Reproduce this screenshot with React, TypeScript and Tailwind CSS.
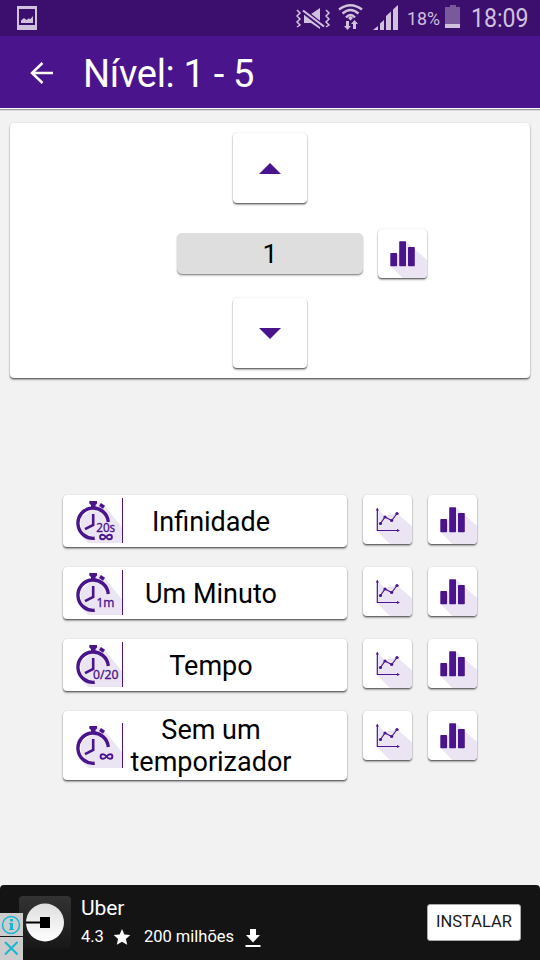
import React from 'react';

interface GameMode {
  label: string;
  badge?: string;
  badgeX?: number;
  badgeWidth?: number;
  badgeY?: number;
  infinite?: boolean;
}

const modes: GameMode[] = [
  { label: 'Infinidade', badge: '20s', badgeX: 33.2, badgeWidth: 19, badgeY: 34, infinite: true },
  { label: 'Um Minuto', badge: '1m', badgeX: 33.5, badgeWidth: 18, badgeY: 36.5 },
  { label: 'Tempo', badge: '0/20', badgeX: 30, badgeWidth: 25.5, badgeY: 36.5 },
  { label: 'Sem um temporizador', infinite: true }
];

const raised =
  'bg-white rounded-[4px] shadow-[0_1px_1px_rgba(0,0,0,0.4),0_2px_2px_rgba(0,0,0,0.3),0_0_2px_rgba(0,0,0,0.12)]';

const StatusBar: React.FC = () => (
  <div className="h-9 bg-[#3c0f6e] flex items-center justify-between text-[#d0c1dd]">
    <svg className="ml-[17px]" width="20" height="24" viewBox="0 0 20 24" fill="currentColor">
      <path fillRule="evenodd" d="M0 0H20V24H0ZM2 3V19H18V3Z" />
      <path d="M4 17V14.5L7 12L9.5 14L11.5 12.5L13.5 13L16 10V17Z" />
    </svg>
    <svg width="245" height="36" viewBox="295 0 245 36" fill="none" stroke="currentColor">
      {/* muted speaker with vibration marks */}
      <path strokeWidth="1.5" d="M297 10L300 13L297 16L300 19L297 22L300 25L297 27M326 10L329 13L326 16L329 19L326 22L329 25L326 27" />
      <path fill="currentColor" stroke="none" d="M304 14H311L320 8V29L311 23H304Z" />
      <path stroke="#3c0f6e" strokeWidth="5" d="M302 10L324 27" />
      <path strokeWidth="2.2" d="M303 10.5L324 26.5" />
      {/* wifi and traffic arrows */}
      <path strokeWidth="2.4" d="M339 9.5Q350.5 1 362 9.5M342.5 13.5Q350.5 6.5 358.5 13.5M346 17.5Q350.5 12.5 355 17.5" />
      <path fill="currentColor" stroke="none" d="M348 18L350.5 16L353 18L350.5 20.5ZM346 21H349V26H351L347.5 30L344 26H346ZM353 29H356V24H358L354.5 20L351 24H353Z" />
      <path fill="currentColor" stroke="none" d="M373 30L378 26V30ZM380 23.5L384 20V30H380ZM386 16L391 11.5V30H386ZM393 9.5L398 5V30H393Z" />
      <text x="407" y="25" fill="currentColor" stroke="none" fontSize="18.5" textLength="33" lengthAdjust="spacingAndGlyphs" fontFamily="Roboto, sans-serif">18%</text>
      <path fill="#79589c" stroke="none" d="M445 7H450V5H456V7H460V24H445Z" />
      <path fill="currentColor" stroke="none" d="M445 24H460V28H445Z" />
      <text x="471" y="27" fill="currentColor" stroke="none" fontSize="25" textLength="57.5" lengthAdjust="spacingAndGlyphs" fontFamily="Roboto, sans-serif">18:09</text>
    </svg>
  </div>
);

const BarsButton: React.FC = () => (
  <button type="button" className={`${raised} block w-[49px] h-[49px] shrink-0 overflow-hidden`}>
    <svg width="49" height="49" viewBox="0 0 49 49">
      <path fill="#ebe4f3" d="M28 12.5L49 31V49H24.5L12.5 37Z" />
      <path fill="white" d="M12.3 24H19.1L21.2 22V12.3H12.3Z" />
      <g fill="#4a148c">
        <rect x="12.3" y="24" width="6.8" height="13.2" rx="0.8" />
        <rect x="21.2" y="12.3" width="6.8" height="24.9" rx="0.8" />
        <rect x="30" y="18" width="6.8" height="19.2" rx="0.8" />
      </g>
    </svg>
  </button>
);

const LineButton: React.FC = () => (
  <button type="button" className={`${raised} block w-[49px] h-[49px] shrink-0 overflow-hidden`}>
    <svg width="49" height="49" viewBox="0 0 49 49">
      <path fill="#ebe4f3" d="M14 14L22 21L34 18L49 31.5V49H27L14 36Z" />
      <path fill="none" stroke="#4a148c" strokeWidth="1.2" d="M14.3 14V35.5H35M17.5 28.5L22 22L28.7 25.5L34 18.5" />
      <g fill="#4a148c">
        <circle cx="17.5" cy="28.5" r="1.6" />
        <circle cx="22" cy="22" r="1.6" />
        <circle cx="28.7" cy="25.5" r="1.6" />
        <circle cx="34" cy="18.5" r="1.6" />
        <path d="M12.8 15.5L14.3 12.5L15.8 15.5ZM34 34L37 35.5L34 37Z" />
      </g>
    </svg>
  </button>
);

const TimerIcon: React.FC<{ mode: GameMode }> = ({ mode }) => (
  <svg width="61" height="45" viewBox="0 0 61 45" className="-mt-px shrink-0">
    <path fill="#ebe4f3" d="M34 3.5L42 8L59 29.5V45H25L19 38.5L17 20L30 10Z" />
    <path fill="white" d="M12 0H26V9A16 16 0 0 0 14 25H12Z" />
    <g fill="none" stroke="#4a148c">
      <path strokeWidth="3.4" d="M45.3 24A15.2 15.2 0 1 0 31.7 40.3" />
      <path strokeWidth="2.6" d="M30.2 16V27L22 31.2" />
      <path strokeWidth="3.5" d="M37 6.5L41 9.2" />
      {mode.infinite && (
        <path
          strokeWidth="1.9"
          d="M43 39C41.7 37.3 40.8 36.7 39.5 36.7C36.3 36.7 36.3 41.3 39.5 41.3C40.8 41.3 41.7 40.7 43 39C44.3 37.3 45.2 36.7 46.5 36.7C49.7 36.7 49.7 41.3 46.5 41.3C45.2 41.3 44.3 40.7 43 39Z"
          transform={mode.badge ? undefined : 'translate(0.5 -5.5)'}
        />
      )}
    </g>
    <path fill="#4a148c" d="M26.3 3H34V5.5L32.5 7V9.5H28V7L26.3 5.5Z" />
    {mode.badge && (
      <text
        x={mode.badgeX}
        y={mode.badgeY}
        fill="#4a148c"
        stroke="#4a148c"
        strokeWidth="0.3"
        fontSize="12"
        textLength={mode.badgeWidth}
        lengthAdjust="spacingAndGlyphs"
        fontFamily="'Noto Sans', sans-serif"
      >
        {mode.badge}
      </text>
    )}
    <rect x="59" width="1" height="45" fill="#4a148c" />
  </svg>
);

const ModeRow: React.FC<{ mode: GameMode }> = ({ mode }) => (
  <div className="flex items-start">
    <button type="button" className={`${raised} w-[284px] min-h-[52px] flex items-center`}>
      <TimerIcon mode={mode} />
      <span className="w-[174px] pt-[3px] pb-[2px] text-[27px] leading-8 text-black text-center">{mode.label}</span>
    </button>
    <div className="ml-4 flex gap-4">
      <LineButton />
      <BarsButton />
    </div>
  </div>
);

const LevelPicker: React.FC = () => (
  <div className={`${raised} mx-[10px] mt-[12px] h-[255px] pt-[10px] flex flex-col items-center`}>
    <button type="button" className={`${raised} w-[74px] h-[70px] flex items-center justify-center`}>
      <svg width="22" height="11" viewBox="0 0 22 11" fill="#4a148c">
        <path d="M0 11L11 0L22 11Z" />
      </svg>
    </button>
    <div className="mt-[26px] w-full pl-[167px] flex items-center">
      <div className="w-[186px] h-[41px] rounded-[5px] bg-[#dedede] shadow-[0_1px_1px_rgba(0,0,0,0.3),0_2px_2px_rgba(0,0,0,0.2)] pt-px text-[26.7px] text-black flex items-center justify-center">
        1
      </div>
      <div className="ml-[15px]">
        <BarsButton />
      </div>
    </div>
    <button type="button" className={`${raised} mt-[20px] w-[74px] h-[70px] flex items-center justify-center`}>
      <svg width="22" height="11" viewBox="0 0 22 11" fill="#4a148c">
        <path d="M0 0H22L11 11Z" />
      </svg>
    </button>
  </div>
);

const AdBanner: React.FC = () => (
  <div className="relative mt-auto h-[75px] rounded-t-[4px] bg-[#141414] text-white flex items-start overflow-hidden">
    <svg className="ml-[19px] mt-[11px] shrink-0" width="52" height="53" viewBox="0 0 52 53">
      <defs>
        <linearGradient id="tile" x2="0" y2="1">
          <stop stopColor="#333333" />
          <stop offset="1" stopColor="#171717" />
        </linearGradient>
        <linearGradient id="disc" x2="0" y2="1">
          <stop stopColor="#dedede" />
          <stop offset="1" stopColor="#ffffff" />
        </linearGradient>
      </defs>
      <rect width="52" height="53" rx="4" fill="url(#tile)" />
      <circle cx="26" cy="26.5" r="19" fill="url(#disc)" />
      <path fill="#000000" d="M7 25.5H21V21H31V32H21V27.5H7Z" />
    </svg>
    <div className="ml-[10px] mt-[11px]">
      <div className="text-[21px] leading-6 tracking-[-0.1px]">Uber</div>
      <div className="mt-[6px] flex items-center text-[16.5px] leading-5">
        <span>4.3</span>
        <svg className="ml-[9px]" width="18" height="18" viewBox="0 0 18 18" fill="white">
          <path d="M9 1L11.4 6.4L17.3 7L12.9 11L14.2 16.8L9 13.8L3.8 16.8L5.1 11L0.7 7L6.6 6.4Z" />
        </svg>
        <span className="ml-[13px]">200 milhões</span>
        <svg className="ml-[11px] mt-[2px]" width="16" height="20" viewBox="0 0 16 20" fill="white">
          <path d="M5 1H11V7H15L8 14.5L1 7H5ZM0.5 17H15.5V19H0.5Z" />
        </svg>
      </div>
    </div>
    <button
      type="button"
      className="ml-auto mr-[19px] mt-[19px] w-[94px] h-[37px] rounded-[3px] bg-white border border-[#aaaaaa] pb-px text-[16.5px] text-[#1a1a1a] whitespace-nowrap flex items-center justify-center"
    >
      INSTALAR
    </button>
    {/* ad choices controls overlap the app icon */}
    <div className="absolute left-0 top-[28px] w-[23px] flex flex-col gap-px">
      <svg width="23" height="23" viewBox="0 0 23 23" className="bg-[#cccccc]" fill="none" stroke="#19b5d2">
        <circle cx="11" cy="12" r="8.5" strokeWidth="1.5" />
        <path strokeWidth="3" d="M11.5 6V8.5M11.5 10V17" />
        <path strokeWidth="1" d="M9 10.5H12M9 16.5H14" />
      </svg>
      <svg width="23" height="23" viewBox="0 0 23 23" className="bg-[#cccccc]" fill="none" stroke="#19b5d2">
        <path strokeWidth="2" d="M5 5L17.5 17.5M17.5 5L5 17.5" />
      </svg>
    </div>
  </div>
);

const App: React.FC = () => {
  return (
    <div className="w-[540px] h-[960px] bg-[#f2f2f2] flex flex-col overflow-hidden font-[Roboto,sans-serif]">
      <StatusBar />
      <header className="h-[72px] bg-[#4a148c] text-white flex items-center">
        <svg className="ml-[30px] mt-[2px]" width="24" height="22" viewBox="0 0 24 22" fill="none" stroke="white" strokeWidth="2.5">
          <path d="M23 11H2M12.5 1L2 11L12.5 21" />
        </svg>
        <h1 className="ml-[29px] text-[38px] leading-none mt-[4px] tracking-[-0.3px]">Nível: 1 - 5</h1>
      </header>
      <div className="h-[3px] shrink-0 bg-[#9b9b9b] border-t border-t-white border-b border-b-[#dddddd]" />

      <LevelPicker />

      <div className="ml-[63px] mt-[117px] flex flex-col gap-5">
        {modes.map((mode) => (
          <ModeRow key={mode.label} mode={mode} />
        ))}
      </div>

      <AdBanner />
    </div>
  );
};

export default App;
